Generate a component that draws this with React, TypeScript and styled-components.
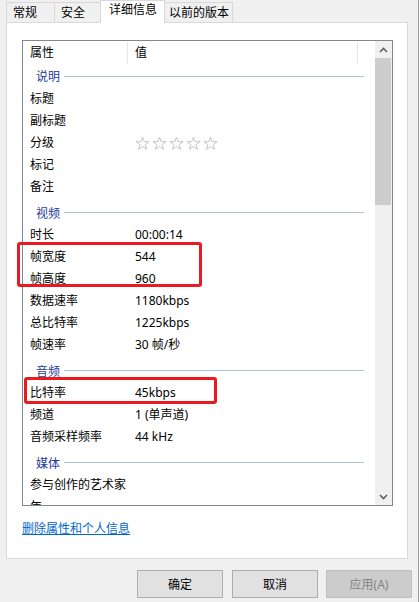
import React from "react";
import styled, { createGlobalStyle, css } from "styled-components";

const GlobalStyle = createGlobalStyle`
  html, body {
    margin: 0;
    padding: 0;
    background: #f0f0f0;
  }
  body {
    font-family: "Noto Sans", "Noto Sans CJK SC", sans-serif;
    font-size: 12px;
    color: #000;
  }
`;

const Window = styled.div`
  position: relative;
  box-sizing: border-box;
  width: 419px;
  height: 602px;
  background: #f0f0f0;
  border-right: 1px solid #a0a0a0;
  overflow: hidden;
`;

/* ---------- tabs ---------- */

const TabStrip = styled.div`
  display: flex;
  align-items: flex-end;
  height: 22px;
  padding-left: 7px;
`;

const Tab = styled.div<{ $w: number; $active?: boolean }>`
  box-sizing: border-box;
  width: ${({ $w }) => $w}px;
  height: 20px;
  padding-left: 6px;
  border: 1px solid #d9d9d9;
  border-bottom: none;
  margin-left: -1px;
  background: #f0f0f0;
  line-height: 19px;
  white-space: nowrap;

  ${({ $active, $w }) =>
    $active &&
    css`
      position: relative;
      z-index: 1;
      width: ${$w + 4}px;
      height: 23px;
      margin: 0 -2px -1px -3px;
      padding-left: 8px;
      background: #fff;
      line-height: 18px;
    `}
`;

/* ---------- panel ---------- */

const Panel = styled.div`
  box-sizing: border-box;
  width: 402px;
  height: 537px;
  margin-left: 6px;
  padding: 17px 0 0 15px;
  background: #fff;
  border: 1px solid #d9d9d9;
`;

const ListBox = styled.div`
  box-sizing: border-box;
  display: flex;
  width: 371px;
  height: 466px;
  border: 1px solid #828790;
`;

const ListMain = styled.div`
  flex: 1;
  display: flex;
  flex-direction: column;
  overflow: hidden;
`;

const HeaderRow = styled.div`
  display: flex;
  flex: none;
  height: 23px;
`;

const HeaderCell = styled.div<{ $w?: number }>`
  box-sizing: border-box;
  ${({ $w }) => ($w ? `width: ${$w}px;` : "flex: 1;")}
  margin-top: 1px;
  padding-left: 7px;
  line-height: 21px;
  border-right: ${({ $w }) => ($w ? "1px solid #e5e5e5" : "none")};
`;

const GroupHeader = styled.div<{ $first?: boolean }>`
  box-sizing: border-box;
  display: flex;
  align-items: center;
  flex: none;
  height: ${({ $first }) => ($first ? 24 : 26)}px;
  padding: 0 11px 0 13px;
  padding-top: ${({ $first }) => ($first ? 0 : 3)}px;
  color: #1e3a9a;
`;

const GroupLine = styled.div`
  flex: 1;
  height: 1px;
  margin-left: 4px;
  background: #b4bfdb;
`;

const Row = styled.div`
  display: flex;
  flex: none;
  height: 22px;
  line-height: 22px;
  white-space: nowrap;
`;

const Label = styled.div`
  box-sizing: border-box;
  width: 112px;
  padding-left: 7px;
`;

const Value = styled.div`
  display: flex;
  align-items: center;
  gap: 2px;
`;

/* ---------- scrollbar ---------- */

const ScrollBar = styled.div`
  display: flex;
  flex-direction: column;
  width: 17px;
  background: #f0f0f0;
`;

const ScrollButton = styled.div`
  display: flex;
  align-items: center;
  justify-content: center;
  height: 17px;
`;

const Thumb = styled.div`
  height: 147px;
  margin: 0 1px 0 0;
  background: #cdcdcd;
`;

const Track = styled.div`
  flex: 1;
`;

/* ---------- footer ---------- */

const LinkRow = styled.div`
  margin-top: 15px;
  line-height: 16px;
`;

const Link = styled.a`
  color: #0066cc;
  text-decoration: underline;
  cursor: pointer;
`;

const ButtonRow = styled.div`
  display: flex;
  justify-content: flex-end;
  gap: 8px;
  margin-top: 11px;
  padding-right: 6px;
`;

const Button = styled.button<{ $spaced?: boolean }>`
  box-sizing: border-box;
  width: 86px;
  height: 28px;
  margin-right: ${({ $spaced }) => ($spaced ? 1 : 0)}px;
  font: inherit;
  color: #000;
  background: #e1e1e1;
  border: 1px solid #adadad;
  padding: 0;

  &:disabled {
    color: #838383;
    background: #cccccc;
    border-color: #bfbfbf;
  }
`;

/* annotation boxes drawn over the screenshot */
const Highlight = styled.div.attrs<{ $x: number; $y: number; $w: number; $h: number }>(
  ({ $x, $y, $w, $h }) => ({ style: { left: $x, top: $y, width: $w, height: $h } })
)`
  position: absolute;
  box-sizing: border-box;
  border: 3px solid #ea1a20;
  border-radius: 3px;
  pointer-events: none;
`;

const Star = () => (
  <svg width="15" height="15" viewBox="0 0 15 15">
    <path
      d="M7.5 1 L9.1 5.6 L14 5.7 L10.1 8.6 L11.5 13.3 L7.5 10.5 L3.5 13.3 L4.9 8.6 L1 5.7 L5.9 5.6 Z"
      fill="none"
      stroke="#c6c6c6"
      strokeWidth="1"
      strokeLinejoin="round"
    />
  </svg>
);

const Chevron = ({ up }: { up?: boolean }) => (
  <svg width="9" height="6" viewBox="0 0 9 6">
    <path
      d={up ? "M1 5 L4.5 1.5 L8 5" : "M1 1 L4.5 4.5 L8 1"}
      fill="none"
      stroke="#606060"
      strokeWidth="1.6"
    />
  </svg>
);

type Item = [string, React.ReactNode?];
type Group = { title: string; items: Item[] };

const groups: Group[] = [
  {
    title: "说明",
    items: [
      ["标题"],
      ["副标题"],
      [
        "分级",
        <>
          <Star />
          <Star />
          <Star />
          <Star />
          <Star />
        </>,
      ],
      ["标记"],
      ["备注"],
    ],
  },
  {
    title: "视频",
    items: [
      ["时长", "00:00:14"],
      ["帧宽度", "544"],
      ["帧高度", "960"],
      ["数据速率", "1180kbps"],
      ["总比特率", "1225kbps"],
      ["帧速率", "30 帧/秒"],
    ],
  },
  {
    title: "音频",
    items: [
      ["比特率", "45kbps"],
      ["频道", "1 (单声道)"],
      ["音频采样频率", "44 kHz"],
    ],
  },
  {
    title: "媒体",
    items: [["参与创作的艺术家"], ["年"]],
  },
];

export default function App() {
  return (
    <>
      <GlobalStyle />
      <Window>
        <TabStrip>
          <Tab $w={49}>常规</Tab>
          <Tab $w={49}>安全</Tab>
          <Tab $w={61} $active>
            详细信息
          </Tab>
          <Tab $w={71}>以前的版本</Tab>
        </TabStrip>

        <Panel>
          <ListBox>
            <ListMain>
              <HeaderRow>
                <HeaderCell $w={105}>属性</HeaderCell>
                <HeaderCell $w={230}>值</HeaderCell>
                <HeaderCell />
              </HeaderRow>
              {groups.map((g, gi) => (
                <React.Fragment key={g.title}>
                  <GroupHeader $first={gi === 0}>
                    {g.title}
                    <GroupLine />
                  </GroupHeader>
                  {g.items.map(([label, value]) => (
                    <Row key={label}>
                      <Label>{label}</Label>
                      <Value>{value}</Value>
                    </Row>
                  ))}
                </React.Fragment>
              ))}
            </ListMain>
            <ScrollBar>
              <ScrollButton>
                <Chevron up />
              </ScrollButton>
              <Thumb />
              <Track />
              <ScrollButton>
                <Chevron />
              </ScrollButton>
            </ScrollBar>
          </ListBox>
          <LinkRow>
            <Link>删除属性和个人信息</Link>
          </LinkRow>
        </Panel>

        <ButtonRow>
          <Button $spaced>确定</Button>
          <Button>取消</Button>
          <Button disabled>应用(A)</Button>
        </ButtonRow>

        <Highlight $x={17} $y={242} $w={185} $h={45} />
        <Highlight $x={24} $y={377} $w={193} $h={27} />
      </Window>
    </>
  );
}
